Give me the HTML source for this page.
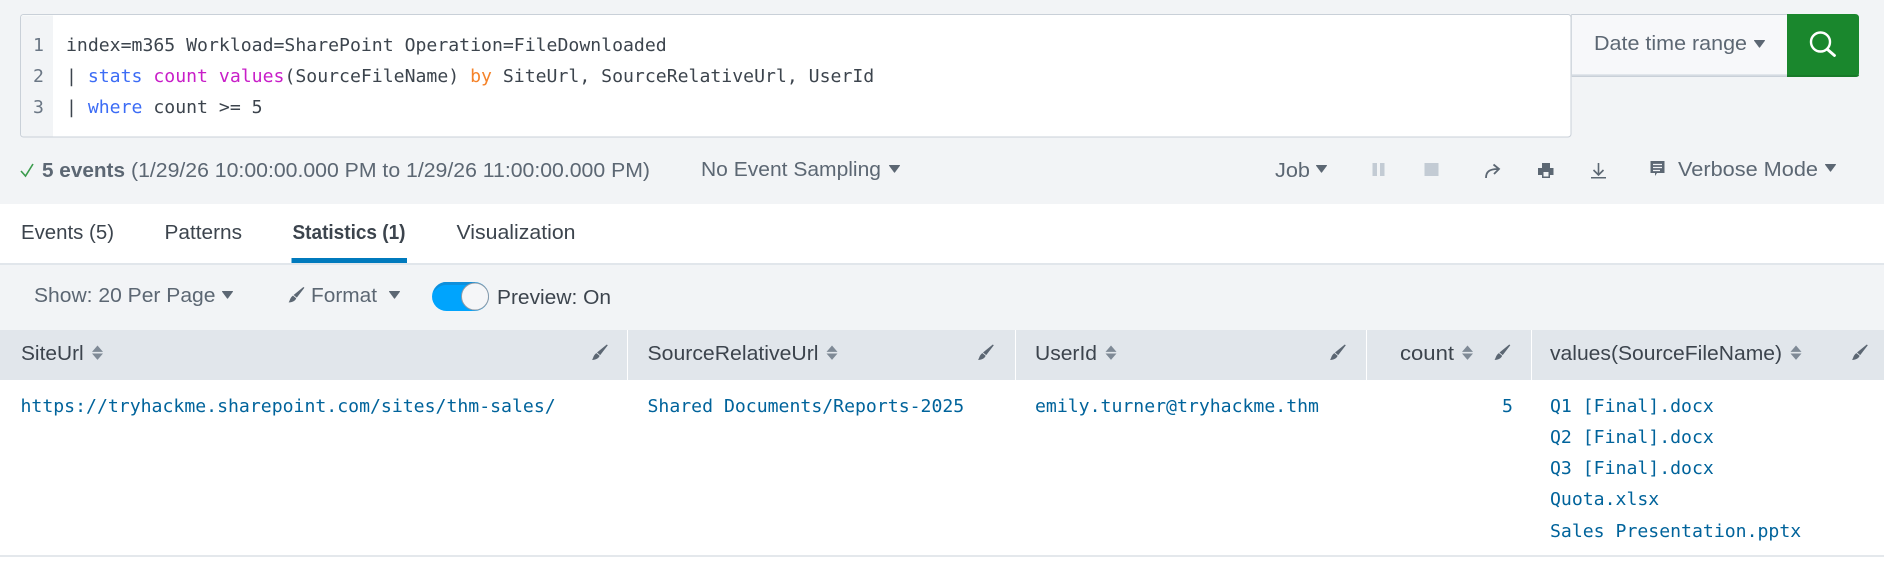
<!DOCTYPE html>
<html lang="en">
<head>
<meta charset="utf-8">
<title>Search</title>
<style>
html,body{margin:0;padding:0;width:1884px;height:570px;overflow:hidden;background:#fff}
svg{display:block;position:absolute;left:0;top:0}
text{font-family:"Liberation Sans",sans-serif;font-size:20px;fill:#5c6773;white-space:pre}
.m{font-family:"DejaVu Sans Mono","Liberation Mono",monospace;font-size:18.15px;fill:#3c444d}
.l{fill:#00639b}
.n{fill:#6b7785}
.b{fill:#3c6cf5}
.p{fill:#c81ec8}
.o{fill:#f5832a}
.d{fill:#3c444d}
.ic{fill:#5c6773}
</style>
</head>
<body>
<svg width="1884" height="570" viewBox="0 0 1884 570" xmlns="http://www.w3.org/2000/svg">
<defs>
<path id="brush" d="M14.800 0 L15.800 0.800 L8.200 10.600 L5 8 Z M4.400 8.600 L7.600 11.200 C7 13.600 3.800 15.400 0 15.400 C1.400 13.600 1.400 10.400 4.400 8.600 Z"/>
<path id="sort" d="M6 0 L11.500 6.400 L0.500 6.400 Z M0.500 8 L11.500 8 L6 14.400 Z"/>
<path id="caret" d="M0.500 0 L10.500 0 Q11.300 0 10.900 0.800 L6 7.400 Q5.500 8 5 7.400 L0.100 0.800 Q-0.300 0 0.500 0 Z"/>
</defs>

<!-- backgrounds -->
<rect x="0" y="0" width="1884" height="204" fill="#f2f4f6"/>
<rect x="0" y="204" width="1884" height="59" fill="#fff"/>
<rect x="0" y="263" width="1884" height="2" fill="#e1e6eb"/>
<rect x="0" y="265" width="1884" height="65" fill="#f2f4f6"/>
<rect x="0" y="330" width="1884" height="50" fill="#e1e6eb"/>
<rect x="0" y="380" width="1884" height="175" fill="#fff"/>
<rect x="0" y="555" width="1884" height="2" fill="#e4e8ec"/>

<!-- search box -->
<rect x="20.500" y="14.500" width="1550.500" height="122.500" rx="3" fill="#fff" stroke="#c9d0d8"/>
<path d="M24 15.500 H53 V136.500 H24 Q21 136.500 21 133.500 V18.500 Q21 15.500 24 15.500 Z" fill="#f2f4f6"/>
<text class="m n" x="33" y="51">1</text>
<text class="m n" x="33" y="82">2</text>
<text class="m n" x="33" y="113">3</text>
<text class="m" x="66" y="51">index=m365 Workload=SharePoint Operation=FileDownloaded</text>
<text class="m" x="66" y="82">| <tspan class="b">stats</tspan> <tspan class="p">count</tspan> <tspan class="p">values</tspan>(SourceFileName) <tspan class="o">by</tspan> SiteUrl, SourceRelativeUrl, UserId</text>
<text class="m" x="66" y="113">| <tspan class="b">where</tspan> count &gt;= 5</text>

<!-- date range -->
<rect x="1571" y="14" width="217" height="60" fill="#f7f8fa"/>
<rect x="1571" y="14" width="217" height="1" fill="#c9d0d8"/>
<rect x="1571" y="74" width="217" height="1.500" fill="#e1e6eb"/>
<rect x="1571" y="75.500" width="217" height="1.500" fill="#c9d0d8"/>
<rect x="1571" y="14" width="1" height="63" fill="#d3d9df"/>
<text x="1594" y="50" textLength="153" lengthAdjust="spacingAndGlyphs">Date time range</text>
<use href="#caret" x="1754" y="40" class="ic"/>
<path d="M1787 14 H1855 Q1859 14 1859 18 V73 Q1859 77 1855 77 H1787 Z" fill="#1a872d"/>
<path d="M1787 75 H1859 Q1859 77 1855 77 H1787 Z" fill="#187a29"/>
<circle cx="1820.500" cy="42" r="9.500" fill="none" stroke="#fff" stroke-width="2.400"/>
<path d="M1827.500 49.500 L1834.500 55.500" stroke="#fff" stroke-width="2.800" stroke-linecap="round"/>

<!-- status row -->
<path d="M21 171 L25.500 176 L33 164" fill="none" stroke="#3a9b4c" stroke-width="1.600"/>
<text x="42" y="177" textLength="83" lengthAdjust="spacingAndGlyphs" style="font-weight:700">5 events</text>
<text x="131" y="177" textLength="519" lengthAdjust="spacingAndGlyphs">(1/29/26 10:00:00.000 PM to 1/29/26 11:00:00.000 PM)</text>
<text x="701" y="176" textLength="180" lengthAdjust="spacingAndGlyphs">No Event Sampling</text>
<use href="#caret" x="889" y="165" class="ic"/>

<text x="1275" y="177" textLength="35" lengthAdjust="spacingAndGlyphs">Job</text>
<use href="#caret" x="1316" y="165" class="ic"/>
<rect x="1372.500" y="163" width="4.500" height="13" fill="#c3cbd4"/>
<rect x="1380" y="163" width="4.500" height="13" fill="#c3cbd4"/>
<rect x="1424.500" y="163" width="14" height="13" fill="#c3cbd4"/>
<path d="M1486 178 C1486 172 1489 169 1498 169 M1493.500 164.500 L1499 169 L1494 174" fill="none" stroke="#5c6773" stroke-width="1.800"/>
<path d="M1542 163 H1550 V168 H1553.500 V175 H1550 V178 H1542 V175 H1538 V168 H1542 Z M1543.500 172 V176.500 H1548.500 V172 Z" fill="#5c6773" fill-rule="evenodd"/>
<path d="M1598.500 163 V175 M1593.500 170 L1598.500 175 L1603.500 170" fill="none" stroke="#5c6773" stroke-width="1.600"/>
<rect x="1591" y="177" width="15" height="1.500" fill="#5c6773"/>
<path d="M1650.500 161 H1664.500 V173 H1657 L1655 176 V173 H1650.500 Z" fill="#5c6773"/>
<path d="M1653 164.500 H1662 M1653 167.500 H1662 M1653 170.500 H1660" stroke="#f2f4f6" stroke-width="1.200"/>
<text x="1678" y="176" textLength="140" lengthAdjust="spacingAndGlyphs">Verbose Mode</text>
<use href="#caret" x="1825" y="164" class="ic"/>

<!-- tabs -->
<text class="d" x="21" y="239" textLength="93" lengthAdjust="spacingAndGlyphs">Events (5)</text>
<text class="d" x="164.500" y="239" textLength="77.500" lengthAdjust="spacingAndGlyphs">Patterns</text>
<text class="d" x="292.500" y="239" textLength="113" lengthAdjust="spacingAndGlyphs" style="font-weight:700">Statistics (1)</text>
<text class="d" x="456.500" y="239" textLength="119" lengthAdjust="spacingAndGlyphs">Visualization</text>
<rect x="291.500" y="258" width="115.500" height="5" fill="#007abd"/>

<!-- toolbar -->
<text x="34" y="302" textLength="181.500" lengthAdjust="spacingAndGlyphs">Show: 20 Per Page</text>
<use href="#caret" x="222" y="291" class="ic"/>
<use href="#brush" x="288.600" y="287" class="ic"/>
<text x="311" y="302" textLength="66" lengthAdjust="spacingAndGlyphs">Format</text>
<use href="#caret" x="389" y="291" class="ic"/>
<rect x="432" y="282" width="57" height="29" rx="14.500" fill="#00a4fd"/>
<path d="M446 282 H475 V285 H446 C440 285 436 289 433.500 292 C435 286 440 282 446 282 Z" fill="#0e8fdb"/>
<circle cx="475" cy="296.500" r="13.500" fill="#f5f6f8" stroke="#8f9aa6" stroke-width="1"/>
<text class="d" x="497" y="304" textLength="114" lengthAdjust="spacingAndGlyphs">Preview: On</text>

<!-- table header -->
<rect x="627" y="330" width="1" height="50" fill="#fff"/>
<rect x="1015" y="330" width="1" height="50" fill="#fff"/>
<rect x="1366" y="330" width="1" height="50" fill="#fff"/>
<rect x="1531" y="330" width="1" height="50" fill="#fff"/>

<text class="d" x="21" y="360" textLength="62.700" lengthAdjust="spacingAndGlyphs">SiteUrl</text>
<use href="#sort" x="91.500" y="345.500" fill="#7f8a96"/>
<use href="#brush" x="592" y="344.500" class="ic"/>

<text class="d" x="647.500" y="360" textLength="171" lengthAdjust="spacingAndGlyphs">SourceRelativeUrl</text>
<use href="#sort" x="826" y="345.500" fill="#7f8a96"/>
<use href="#brush" x="978" y="344.500" class="ic"/>

<text class="d" x="1035" y="360" textLength="62" lengthAdjust="spacingAndGlyphs">UserId</text>
<use href="#sort" x="1105" y="345.500" fill="#7f8a96"/>
<use href="#brush" x="1330" y="344.500" class="ic"/>

<text class="d" x="1400" y="360" textLength="54" lengthAdjust="spacingAndGlyphs">count</text>
<use href="#sort" x="1461.500" y="345.500" fill="#7f8a96"/>
<use href="#brush" x="1494.500" y="344.500" class="ic"/>

<text class="d" x="1550" y="360" textLength="232" lengthAdjust="spacingAndGlyphs">values(SourceFileName)</text>
<use href="#sort" x="1790" y="345.500" fill="#7f8a96"/>
<use href="#brush" x="1852" y="344.500" class="ic"/>

<!-- table row -->
<text class="m l" x="20.500" y="412">https://tryhackme.sharepoint.com/sites/thm-sales/</text>
<text class="m l" x="647.500" y="412">Shared Documents/Reports-2025</text>
<text class="m l" x="1035" y="412">emily.turner@tryhackme.thm</text>
<text class="m l" x="1502" y="412">5</text>
<text class="m l" x="1550" y="412">Q1 [Final].docx</text>
<text class="m l" x="1550" y="443">Q2 [Final].docx</text>
<text class="m l" x="1550" y="474">Q3 [Final].docx</text>
<text class="m l" x="1550" y="505">Quota.xlsx</text>
<text class="m l" x="1550" y="537">Sales Presentation.pptx</text>
</svg>
</body>
</html>
